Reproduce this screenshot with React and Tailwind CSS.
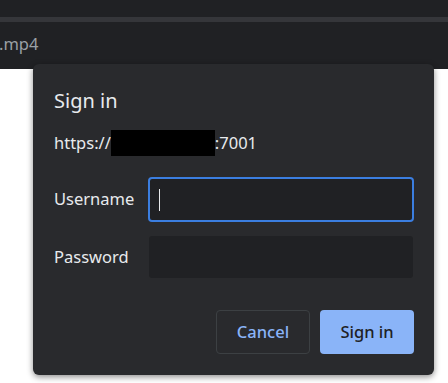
import React from "react";

const SignInDialog = () => {
  return (
    <div className="absolute left-[33px] top-[64px] w-[401px] h-[311px] bg-[#292a2d] rounded-[6px] shadow-[0_2px_6px_rgba(0,0,0,0.45)] pt-[23px] pl-[21px] pr-[20px] text-[#e8eaed]">
      {/* Title */}
      <h2 className="text-[20px] leading-[28px]">Sign in</h2>

      {/* Origin */}
      <div className="mt-[18px] h-[20px] flex items-center text-[16.5px] leading-[20px]">
        <span>https://</span>
        <span className="inline-block w-[104px] h-[26px] bg-black"></span>
        <span>:7001</span>
      </div>

      {/* Fields */}
      <div className="mt-[24px] flex flex-col gap-[14px]">
        <div className="flex items-center">
          <label className="w-[94px] text-[16.5px]">Username</label>
          <div className="flex-1 h-[45px] rounded-[4px] border-2 border-[#3b7ee0] bg-[#202124] flex items-center pl-[9px]">
            <span className="w-px h-[22px] bg-[#e8eaed]"></span>
          </div>
        </div>
        <div className="flex items-center">
          <label className="w-[94px] text-[16.5px]">Password</label>
          <div className="flex-1 h-[42px] ml-px mr-px rounded-[3px] bg-[#202124]"></div>
        </div>
      </div>

      {/* Actions */}
      <div className="mt-[32px] flex justify-end gap-[10px]">
        <button className="w-[94px] h-[44px] rounded-[4px] border border-[#3c4043] text-[#8ab4f8] text-[16.5px] font-medium">
          Cancel
        </button>
        <button className="w-[94px] h-[44px] rounded-[4px] bg-[#8ab4f8] text-[#202124] text-[16.5px] font-medium">
          Sign in
        </button>
      </div>
    </div>
  );
};

const App = () => {
  return (
    <div className="relative w-[448px] h-[383px] overflow-hidden bg-white font-['Noto_Sans',sans-serif]">
      <div className="h-[17px] bg-[#202124]"></div>
      <div className="h-[5px] bg-[#35363a]"></div>
      <div className="h-[47px] bg-[#202124] flex items-center pb-[2px]">
        <span className="-ml-[1px] text-[16.5px] text-[#9aa0a6]">.mp4</span>
      </div>
      <SignInDialog />
    </div>
  );
};

export default App;
